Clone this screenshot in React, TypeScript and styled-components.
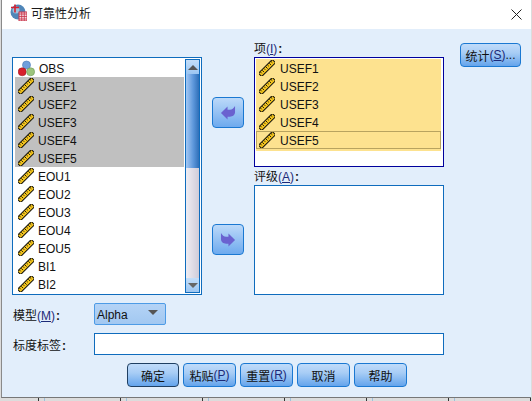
import styled, { createGlobalStyle } from "styled-components";

const leftRows = ["USEF1", "USEF2", "USEF3", "USEF4", "USEF5"];
const restRows = ["EOU1", "EOU2", "EOU3", "EOU4", "EOU5", "BI1", "BI2"];

function RulerIcon() {
  return (
    <svg width="16" height="16" viewBox="0 0 16 16">
      <g transform="rotate(-45 8 8)">
        <rect x="-1.8" y="5.7" width="19.6" height="4.6" fill="#f8c81e" stroke="#15130a" strokeWidth="1" />
        <path d="M0.5 6.2v1.8M3 6.2v2.6M5.5 6.2v1.8M8 6.2v2.6M10.5 6.2v1.8M13 6.2v2.6M15.5 6.2v1.8" stroke="#1c1808" strokeWidth="0.9" />
      </g>
    </svg>
  );
}

function NominalIcon() {
  return (
    <svg width="17" height="17" viewBox="0 0 17 17">
      <circle cx="8.5" cy="5" r="4" fill="#6f9fdc" stroke="#4a78b4" strokeWidth="0.6" />
      <circle cx="4.2" cy="11.8" r="4" fill="#d8202c" stroke="#a01a20" strokeWidth="0.6" />
      <circle cx="12.6" cy="11.8" r="4" fill="#9cc47c" stroke="#6f9a58" strokeWidth="0.6" />
    </svg>
  );
}

function TitleIcon() {
  return (
    <svg width="17" height="17" viewBox="0 0 17 17">
      <circle cx="8" cy="8" r="7.5" fill="#4f86b8" />
      <circle cx="6" cy="6" r="3.5" fill="#9cc3e0" />
      <path d="M5 0.5v8M1 3.5h8" stroke="#d42030" strokeWidth="1.6" />
      <rect x="9" y="8" width="8" height="9" fill="#f3d6dc" stroke="#c8344a" />
      <path d="M9 10h8M9 12.5h8M9 15h8M11.7 8v9M14.3 8v9" stroke="#c8344a" strokeWidth="0.8" />
    </svg>
  );
}

function MoveArrow({ right }: { right?: boolean }) {
  return (
    <svg width="32" height="31" viewBox="0 0 32 31">
      <path
        transform={right ? "translate(32 0) scale(-1 1)" : undefined}
        d="M8.5 16 L15.5 9 V12.5 H18 C20.5 12.5 22 11 23.5 8.5 V15 C23.5 18 21 20 18 20 H15.5 V23 Z"
        fill="#6a62d0"
      />
    </svg>
  );
}

function App() {
  return (
    <Page>
      <GlobalStyle />
      <Dialog>
        <TitleBar>
          <TitleIcon />
          <TitleText>可靠性分析</TitleText>
          <CloseIcon width="11" height="11" viewBox="0 0 11 11">
            <path d="M0.5 0.5L10.5 10.5M10.5 0.5L0.5 10.5" stroke="#222" strokeWidth="1" />
          </CloseIcon>
        </TitleBar>
        <Body>
          <TopArea>
            <VariableList>
              <Rows>
                <Row>
                  <NominalIcon />
                  <RowText>OBS</RowText>
                </Row>
                {leftRows.map((name) => (
                  <Row key={name} $selected>
                    <RulerIcon />
                    <RowText>{name}</RowText>
                  </Row>
                ))}
                {restRows.map((name) => (
                  <Row key={name}>
                    <RulerIcon />
                    <RowText>{name}</RowText>
                  </Row>
                ))}
              </Rows>
              <ScrollBar>
                <ScrollButton>
                  <UpTriangle />
                </ScrollButton>
                <ScrollThumb />
                <ScrollTrack />
                <ScrollButton>
                  <DownTriangle />
                </ScrollButton>
              </ScrollBar>
            </VariableList>
            <MiddleColumn>
              <MoveButton>
                <MoveArrow />
              </MoveButton>
              <MoveButton>
                <MoveArrow right />
              </MoveButton>
            </MiddleColumn>
            <TargetColumn>
              <FieldLabel>
                项<Mnemonic>(<u>I</u>)</Mnemonic><Colon>:</Colon>
              </FieldLabel>
              <ItemsBox>
                <ItemsFill>
                  {leftRows.map((name) => (
                    <ItemRow key={name} $focused={name === "USEF5"}>
                      <RulerIcon />
                      <RowText>{name}</RowText>
                    </ItemRow>
                  ))}
                </ItemsFill>
              </ItemsBox>
              <FieldLabel $second>
                评级<Mnemonic>(<u>A</u>)</Mnemonic><Colon>:</Colon>
              </FieldLabel>
              <RatingBox />
            </TargetColumn>
            <SideColumn>
              <PushButton $width={61}>
                统计<Mnemonic>(<u>S</u>)</Mnemonic>...
              </PushButton>
            </SideColumn>
          </TopArea>
          <FormRow>
            <FormLabel>
              模型<Mnemonic>(<u>M</u>)</Mnemonic><Colon>:</Colon>
            </FormLabel>
            <Combo>
              <ComboText>Alpha</ComboText>
              <ComboTriangle />
            </Combo>
          </FormRow>
          <FormRow>
            <FormLabel>标度标签<Colon>:</Colon></FormLabel>
            <TextBox />
          </FormRow>
          <Actions>
            <PushButton $width={52} $default>确定</PushButton>
            <PushButton $width={53}>
              粘贴<Mnemonic>(<u>P</u>)</Mnemonic>
            </PushButton>
            <PushButton $width={53}>
              重置<Mnemonic>(<u>R</u>)</Mnemonic>
            </PushButton>
            <PushButton $width={53}>取消</PushButton>
            <PushButton $width={53}>帮助</PushButton>
          </Actions>
        </Body>
      </Dialog>
    </Page>
  );
}

const GlobalStyle = createGlobalStyle`
  html, body {
    margin: 0;
    padding: 0;
  }
  body {
    font-family: "Liberation Sans", "Noto Sans CJK SC", sans-serif;
    font-size: 12px;
    color: #111;
  }
`;
const Page = styled.div`
  width: 532px;
  height: 401px;
  overflow: hidden;
  padding-left: 1px;
  box-sizing: border-box;
  background-color: #dcdcdc;
  background-image: repeating-linear-gradient(
    90deg,
    transparent 0 38px,
    #333 38px 39px,
    transparent 39px 44px,
    #9fc0dc 44px 45px,
    transparent 45px 82px
  );
`;
const Dialog = styled.div`
  width: 530px;
  height: 398px;
  box-sizing: border-box;
  border-left: 1px solid #8a8a8a;
  border-bottom: 1px solid #777;
  display: flex;
  flex-direction: column;
  background: #e2eefb;
`;
const TitleBar = styled.div`
  height: 29px;
  flex-shrink: 0;
  display: flex;
  align-items: center;
  padding: 0 10px 5px 8px;
  box-sizing: border-box;
  background: #fff;
`;
const TitleText = styled.span`
  margin-left: 4px;
  font-size: 12px;
  color: #1a1a1a;
`;
const CloseIcon = styled.svg`
  margin-left: auto;
  margin-top: 5px;
  margin-right: -1px;
`;
const Body = styled.div`
  flex: 1;
  padding: 12px 0 0 10px;
`;
const TopArea = styled.div`
  display: flex;
  align-items: flex-start;
`;
const VariableList = styled.div`
  width: 190px;
  height: 238px;
  margin-top: 16px;
  box-sizing: border-box;
  border: 1px solid #0f6cbd;
  background: #fff;
  display: flex;
  padding: 1px 1px 1px 2px;
`;
const Rows = styled.div`
  flex: 1;
  margin-right: 1px;
`;
const Row = styled.div<{ $selected?: boolean }>`
  height: 18px;
  display: flex;
  align-items: center;
  padding-left: 3px;
  background: ${(p) => (p.$selected ? "#c0c0c0" : "transparent")};
`;
const RowText = styled.span`
  margin-left: 4px;
  padding-top: 2px;
  font-size: 12px;
  line-height: 18px;
  color: #111;
`;
const ScrollBar = styled.div`
  width: 15px;
  box-sizing: border-box;
  border: 1px solid #0f6cbd;
  display: flex;
  flex-direction: column;
`;
const ScrollButton = styled.div`
  height: 14px;
  flex-shrink: 0;
  display: flex;
  align-items: center;
  justify-content: center;
  background: linear-gradient(#c4def9, #9cc6f2);
`;
const UpTriangle = styled.div`
  width: 0;
  height: 0;
  border-left: 5px solid transparent;
  border-right: 5px solid transparent;
  border-bottom: 5px solid #555;
`;
const DownTriangle = styled.div`
  width: 0;
  height: 0;
  border-left: 5px solid transparent;
  border-right: 5px solid transparent;
  border-top: 5px solid #666;
`;
const ScrollThumb = styled.div`
  height: 94px;
  flex-shrink: 0;
  background: linear-gradient(90deg, #a4c8f4, #5e98dc 55%, #2f6fb8);
`;
const ScrollTrack = styled.div`
  flex: 1;
  background: linear-gradient(90deg, #efedf3, #cfccd9);
`;
const MiddleColumn = styled.div`
  width: 52px;
  padding: 56px 0 0 10px;
  box-sizing: border-box;
  display: flex;
  flex-direction: column;
  gap: 96px;
`;
const MoveButton = styled.div`
  width: 32px;
  height: 31px;
  box-sizing: border-box;
  border: 1px solid #1a78d2;
  border-radius: 4px;
  background: linear-gradient(#bcd9f9, #6eaaee);
  display: flex;
  align-items: center;
  justify-content: center;
`;
const TargetColumn = styled.div`
  width: 190px;
`;
const FieldLabel = styled.div<{ $second?: boolean }>`
  height: ${(p) => (p.$second ? "18px" : "16px")};
  line-height: ${(p) => (p.$second ? "21px" : "16px")};
  font-size: 12px;
`;
const Mnemonic = styled.span`
  color: #1c2a78;
`;
const Colon = styled.span`
  margin-left: 1px;
  font-weight: bold;
`;
const ItemsBox = styled.div`
  height: 110px;
  box-sizing: border-box;
  border: 1px solid #00009c;
  background: #fff;
  padding: 1px 2px 0 1px;
`;
const ItemsFill = styled.div`
  height: 92px;
  background: #fde28f;
`;
const ItemRow = styled.div<{ $focused?: boolean }>`
  height: 18px;
  box-sizing: border-box;
  display: flex;
  align-items: center;
  padding-left: ${(p) => (p.$focused ? "2px" : "3px")};
  border: ${(p) => (p.$focused ? "1px solid #b8a35f" : "none")};
  span {
    margin-left: 5px;
  }
`;
const RatingBox = styled.div`
  height: 110px;
  box-sizing: border-box;
  border: 1px solid #0f6cbd;
  background: #fff;
`;
const SideColumn = styled.div`
  margin: 2px 0 0 16px;
`;
const PushButton = styled.div<{ $width: number; $default?: boolean }>`
  width: ${(p) => p.$width}px;
  height: 24px;
  box-sizing: border-box;
  border: 1px solid ${(p) => (p.$default ? "#1f3f62" : "#1a78d2")};
  border-radius: 4px;
  background: linear-gradient(#c0dbfa, #a8cdf5 40%, #64a4ec);
  display: flex;
  align-items: center;
  justify-content: center;
  font-size: 12px;
  white-space: nowrap;
`;
const FormRow = styled.div`
  display: flex;
  align-items: center;
  margin-top: 8px;
  padding-left: 1px;
`;
const FormLabel = styled.div`
  width: 81px;
  font-size: 12px;
`;
const Combo = styled.div`
  width: 72px;
  height: 22px;
  box-sizing: border-box;
  border: 1px solid #4d9be6;
  border-radius: 2px;
  background: linear-gradient(#b4d3f6, #a2c8f1);
  display: flex;
  align-items: center;
  justify-content: space-between;
  padding: 0 7px 0 2px;
  font-size: 12px;
`;
const ComboText = styled.span`
  padding-top: 2px;
`;
const ComboTriangle = styled.div`
  width: 0;
  height: 0;
  margin-bottom: 3px;
  border-left: 5px solid transparent;
  border-right: 5px solid transparent;
  border-top: 5px solid #555;
`;
const TextBox = styled.div`
  width: 350px;
  height: 22px;
  box-sizing: border-box;
  border: 1px solid #0f6cbd;
  background: #fff;
`;
const Actions = styled.div`
  display: flex;
  gap: 4px;
  margin-top: 8px;
  padding-left: 115px;
`;

export default App;
